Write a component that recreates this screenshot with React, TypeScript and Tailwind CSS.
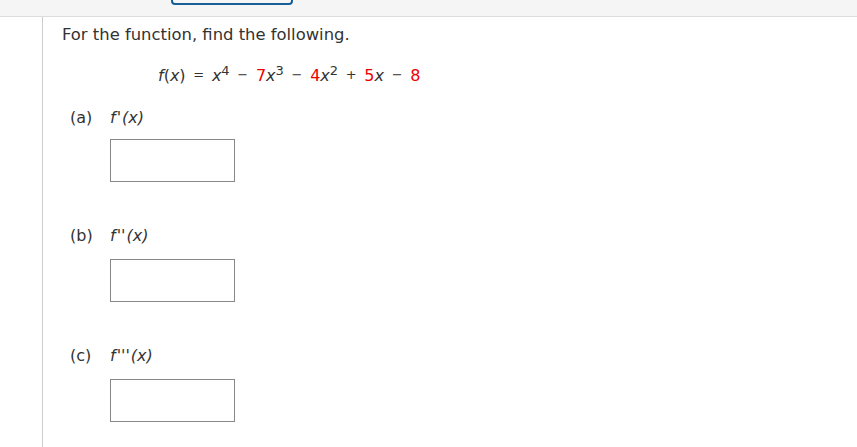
const red = "text-[#e00]";

function Op({ c }: { c: string }) {
  return <span className="inline-block mx-[7.7px] text-[13px] leading-none relative -top-[2px]">{c}</span>;
}

function Sup({ n }: { n: string }) {
  return <sup className="text-[13px] -top-[6px]">{n}</sup>;
}

function Part({ label, fn, first }: { label: string; fn: string; first?: boolean }) {
  return (
    <div className={first ? "mt-[22px]" : "mt-[44px]"}>
      <div className="flex items-center pl-[8px] h-5 leading-5">
        <span className="w-[40px]">({label})</span>
        <span className="italic">
          f<span className="px-[1px]">{fn}</span>(x)
        </span>
      </div>
      <div
        className={`ml-[48px] ${first ? "mt-[11px]" : "mt-[13px]"} w-[125px] h-[43px] border border-[#888] bg-white`}
      />
    </div>
  );
}

export default function App() {
  return (
    <div
      className="w-[857px] h-[447px] bg-white text-[#333] text-[16px] overflow-hidden"
      style={{ fontFamily: '"DejaVu Sans", Verdana, sans-serif' }}
    >
      <div className="relative h-[17px] bg-[#f5f5f5] border-b border-[#ddd]">
        <div className="absolute left-[171px] -top-[10px] w-[122px] h-[15px] rounded-[4px] border-2 border-[#155f95]" />
      </div>
      <div className="ml-[42px] h-[430px] border-l border-[#ccc] pl-[19px] pt-[8px]">
        <p className="h-5 leading-5 text-[16.4px]">For the function, find the following.</p>
        <div className="h-5 pl-[96px] mt-[21px] leading-5 whitespace-nowrap">
          <span className="italic">f</span>(<span className="italic">x</span>)
          <Op c="=" />
          <span className="italic">x</span>
          <Sup n="4" />
          <Op c="−" />
          <span className={red}>7</span>
          <span className="italic">x</span>
          <Sup n="3" />
          <Op c="−" />
          <span className={red}>4</span>
          <span className="italic">x</span>
          <Sup n="2" />
          <Op c="+" />
          <span className={red}>5</span>
          <span className="italic">x</span>
          <Op c="−" />
          <span className={red}>8</span>
        </div>
        <Part label="a" fn="'" first />
        <Part label="b" fn="''" />
        <Part label="c" fn="'''" />
      </div>
    </div>
  );
}
